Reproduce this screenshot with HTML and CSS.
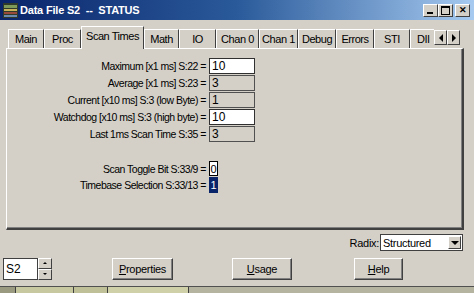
FILE: index.html
```html
<!DOCTYPE html>
<html>
<head>
    <meta charset="UTF-8" />
    <title>Data File S2 -- STATUS</title>
    <link rel="stylesheet" href="styles.css">
</head>
<body>
    <div class="window">
        <div class="titlebar">
            <svg class="app-icon" width="15" height="15" viewBox="0 0 15 15">
                <rect x="0" y="0" width="15" height="15" fill="#2f3a2a"/>
                <rect x="1" y="2" width="13" height="3" fill="#7d9a5a"/>
                <rect x="1" y="6" width="13" height="2" fill="#c8b45a"/>
                <rect x="1" y="9" width="13" height="2" fill="#9a4a3a"/>
                <rect x="1" y="12" width="13" height="2" fill="#6a8ab0"/>
            </svg>
            <span class="title">Data File S2&nbsp; --&nbsp; STATUS</span>
            <div class="caption-buttons">
                <div class="cap-btn"><span class="min-glyph"></span></div>
                <div class="cap-btn"><span class="max-glyph"></span></div>
                <div class="cap-btn close">&#x2715;</div>
            </div>
        </div>

        <div class="tabstrip">
            <div class="tab w36">Main</div>
            <div class="tab w37">Proc</div>
            <div class="tab active">Scan Times</div>
            <div class="tab w35">Math</div>
            <div class="tab w37">IO</div>
            <div class="tab w43">Chan 0</div>
            <div class="tab w39">Chan 1</div>
            <div class="tab w38">Debug</div>
            <div class="tab w38">Errors</div>
            <div class="tab w36">STI</div>
            <div class="tab last">DII</div>
            <div class="tab-scroll">
                <div class="scroll-btn"><span class="tri-left"></span></div>
                <div class="scroll-btn"><span class="tri-right"></span></div>
            </div>
        </div>

        <div class="panel">
            <div class="fields">
                <span class="label">Maximum [x1 ms] S:22 =</span>
                <span class="box">10</span>
                <span class="label">Average [x1 ms] S:23 =</span>
                <span class="box disabled">3</span>
                <span class="label">Current [x10 ms] S:3 (low Byte) =</span>
                <span class="box disabled">1</span>
                <span class="label">Watchdog [x10 ms] S:3 (high byte) =</span>
                <span class="box">10</span>
                <span class="label">Last 1ms Scan Time S:35 =</span>
                <span class="box disabled">3</span>
            </div>
            <div class="bits">
                <span class="label">Scan Toggle Bit S:33/9 =</span>
                <span class="bit">0</span>
                <span class="label">Timebase Selection S:33/13 =</span>
                <span class="bit selected">1</span>
            </div>
        </div>

        <div class="radix-row">
            <span class="radix-label">Radix:</span>
            <div class="combo">
                <span class="combo-text">Structured</span>
                <div class="combo-btn"><span class="tri-down"></span></div>
            </div>
        </div>

        <div class="button-row">
            <div class="spinner">
                <span class="spin-text">S2</span>
                <div class="spin-btns">
                    <div class="spin-btn"><span class="tri-up-s"></span></div>
                    <div class="spin-btn"><span class="tri-down-s"></span></div>
                </div>
            </div>
            <div class="btn properties"><u>P</u>roperties</div>
            <div class="btn usage"><u>U</u>sage</div>
            <div class="btn help"><u>H</u>elp</div>
        </div>

        <div class="statusbar">
            <span class="seg s1"></span>
            <span class="seg s2"></span>
            <span class="seg s3"></span>
            <span class="seg s4"></span>
        </div>
    </div>
</body>
</html>
```

FILE: styles.css
```css
body {
    margin: 0;
    width: 474px;
    height: 293px;
    overflow: hidden;
    background: #d4d0c8;
    font-family: "Liberation Sans", Arial, sans-serif;
    font-size: 10px;
    color: #000;
}

.window {
    display: flex;
    flex-direction: column;
    height: 293px;
}

/* title bar */
.titlebar {
    height: 20px;
    display: flex;
    align-items: center;
    background: linear-gradient(to right, #0a246a, #2a5a9a 50%, #a6caf0);
    color: #fff;
}

.app-icon {
    margin-left: 3px;
    margin-right: 2px;
}

.title {
    font-weight: bold;
    font-size: 11px;
    letter-spacing: -0.2px;
}

.caption-buttons {
    margin-left: auto;
    margin-right: 4px;
    display: flex;
}

.cap-btn {
    width: 13px;
    height: 11px;
    background: #d4d0c8;
    border: 1px solid;
    border-color: #fff #404040 #404040 #fff;
    display: flex;
    align-items: center;
    justify-content: center;
    color: #000;
    font-size: 9px;
    font-weight: bold;
}

.cap-btn.close {
    margin-left: 2px;
}

.min-glyph {
    width: 6px;
    height: 2px;
    background: #000;
    margin-top: 6px;
    margin-right: 2px;
}

.max-glyph {
    width: 7px;
    height: 6px;
    border: 1px solid #000;
    border-top-width: 2px;
}

/* tabs */
.tabstrip {
    height: 28px;
    display: flex;
    align-items: flex-end;
    padding-left: 8px;
}

.tab {
    height: 19px;
    line-height: 19px;
    text-align: center;
    border-top: 1px solid #fff;
    border-left: 1px solid #fff;
    border-right: 1px solid #404040;
    font-size: 11px;
    letter-spacing: -0.45px;
    box-sizing: border-box;
    white-space: nowrap;
}

.w35 { width: 35px; }
.w36 { width: 36px; }
.w37 { width: 37px; }
.w38 { width: 38px; }
.w39 { width: 39px; }
.w43 { width: 43px; }

.tab.active {
    width: 63px;
    height: 23px;
    line-height: 19px;
    margin-bottom: -1px;
    background: #d4d0c8;
    position: relative;
    z-index: 1;
}

.tab.last {
    width: 24px;
    border-right: none;
    text-align: left;
    padding-left: 6px;
    overflow: hidden;
}

.tab-scroll {
    display: flex;
    margin-bottom: 3px;
}

.scroll-btn {
    width: 11px;
    height: 13px;
    border: 1px solid;
    border-color: #fff #404040 #404040 #fff;
    display: flex;
    align-items: center;
    justify-content: center;
}

.tri-left {
    border-right: 4px solid #000;
    border-top: 4px solid transparent;
    border-bottom: 4px solid transparent;
}

.tri-right {
    border-left: 4px solid #000;
    border-top: 4px solid transparent;
    border-bottom: 4px solid transparent;
}

/* panel */
.panel {
    margin: 0 10px 0 6px;
    height: 182px;
    box-sizing: border-box;
    border-top: 1px solid #fff;
    border-left: 1px solid #fff;
    border-right: 2px solid #404040;
    border-bottom: 2px solid #404040;
    box-shadow: inset -1px -1px 0 #808080;
    padding-top: 9px;
}

.fields,
.bits {
    display: grid;
    grid-template-columns: 199px auto;
    column-gap: 3px;
    align-items: center;
    justify-items: start;
    row-gap: 1px;
}

.label {
    justify-self: end;
    font-size: 10.5px;
    letter-spacing: -0.5px;
    white-space: nowrap;
}

.box {
    width: 46px;
    height: 16px;
    box-sizing: border-box;
    border: 1px solid #303030;
    background: #fff;
    font-size: 12px;
    line-height: 15px;
    padding-left: 2px;
}

.box.disabled {
    background: #d4d0c8;
    border-color: #505050;
}

.bits {
    margin-top: 19px;
}

.bit {
    width: 9px;
    height: 15px;
    box-sizing: border-box;
    border: 1px solid #000;
    background: #fff;
    font-size: 11px;
    line-height: 14px;
    text-align: center;
}

.bit.selected {
    height: 16px;
    background: #0a246a;
    border-color: #0a246a;
    color: #fff;
}

/* radix */
.radix-row {
    display: flex;
    justify-content: flex-end;
    align-items: center;
    margin-top: 4px;
    margin-right: 11px;
    gap: 1px;
}

.radix-label {
    font-size: 11px;
    letter-spacing: -0.3px;
}

.combo {
    width: 83px;
    height: 17px;
    box-sizing: border-box;
    border: 1px solid #404040;
    background: #fff;
    display: flex;
    align-items: center;
}

.combo-text {
    flex: 1;
    padding-left: 2px;
    font-size: 11px;
    letter-spacing: -0.3px;
}

.combo-btn {
    width: 13px;
    height: 13px;
    margin-right: 1px;
    background: #d4d0c8;
    border: 1px solid;
    border-color: #fff #404040 #404040 #fff;
    box-sizing: border-box;
    display: flex;
    align-items: center;
    justify-content: center;
}

.tri-down {
    border-top: 4px solid #000;
    border-left: 4px solid transparent;
    border-right: 4px solid transparent;
}

/* bottom buttons */
.button-row {
    display: flex;
    align-items: center;
    margin-top: 6px;
    padding-left: 3px;
    height: 23px;
}

.spinner {
    display: flex;
    height: 22px;
    width: 49px;
}

.spin-text {
    width: 35px;
    box-sizing: border-box;
    border: 1px solid #404040;
    background: #fff;
    font-size: 12px;
    padding: 3px 0 0 2px;
}

.spin-btns {
    display: flex;
    flex-direction: column;
    width: 14px;
}

.spin-btn {
    flex: 1;
    border: 1px solid;
    border-color: #fff #404040 #404040 #fff;
    display: flex;
    align-items: center;
    justify-content: center;
}

.tri-up-s {
    border-bottom: 2px solid #000;
    border-left: 2px solid transparent;
    border-right: 2px solid transparent;
}

.tri-down-s {
    border-top: 2px solid #000;
    border-left: 2px solid transparent;
    border-right: 2px solid transparent;
}

.btn {
    height: 22px;
    box-sizing: border-box;
    border: 1px solid;
    border-color: #fff #404040 #404040 #fff;
    box-shadow: inset -1px -1px 0 #808080;
    display: flex;
    align-items: center;
    justify-content: center;
    font-size: 11px;
    letter-spacing: -0.3px;
}

.btn.properties {
    width: 61px;
    margin-left: 60px;
}

.btn.usage {
    width: 60px;
    margin-left: 59px;
}

.btn.help {
    width: 49px;
    margin-left: 62px;
}

/* parent status bar */
.statusbar {
    margin-top: auto;
    height: 6px;
    border-top: 1px solid #505050;
    background: #b4b4a0;
    display: flex;
}

.seg {
    height: 6px;
    border-right: 1px solid #404040;
}

.s1 { width: 15px; background: #9a9a80; }
.s2 { width: 57px; background: #c8c8a0; }
.s3 { width: 33px; background: #c0c098; }
.s4 { width: 80px; background: #d0d0a8; }
```
